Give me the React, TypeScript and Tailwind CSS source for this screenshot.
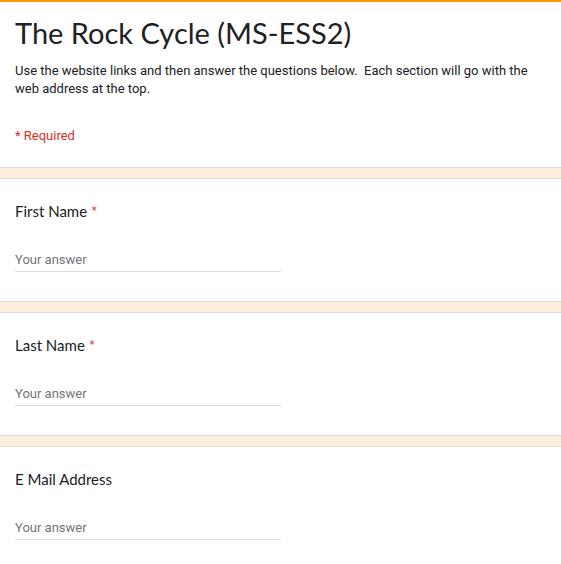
import React from 'react';

const sans = { fontFamily: 'Roboto, "Noto Sans", sans-serif' };
const display = { fontFamily: 'Lato, Roboto, sans-serif' };

interface QuestionProps {
  label: string;
  required?: boolean;
}

const Gap = () => (
  <div className="h-[12px] border-y border-[#dadce0] bg-[#fdefdc]" />
);

const Question: React.FC<QuestionProps> = ({ label, required }) => (
  <div className="bg-white px-[15px] pt-[21px] pb-[29px]">
    <div className="text-[15px] leading-[22px] text-[#202124]" style={display}>
      {label}
      {required && <span className="text-[#d93025]"> *</span>}
    </div>
    <div className="mt-[28px] w-[266px] border-b border-[#dadce0] pb-[1px] text-[13px] leading-[20px] text-[#70757a]">
      Your answer
    </div>
  </div>
);

export default function App() {
  return (
    <div className="min-h-screen w-full bg-white" style={sans}>
      {/* Header card */}
      <div className="border-t-2 border-[#ff9800] bg-white px-[15px] pt-[13px] pb-[22px]">
        <h1 className="text-[29px] leading-[36px] text-[#202124]" style={display}>
          The Rock Cycle (MS-ESS2)
        </h1>
        <p className="mt-[11px] text-[13px] leading-[18px] text-[#202124]">
          Use the website links and then answer the questions below.&nbsp; Each section will go with the
          <br />
          web address at the top.
        </p>
        <p className="mt-[29px] text-[13px] leading-[18px] text-[#d93025]">* Required</p>
      </div>

      <Gap />
      <Question label="First Name" required />
      <Gap />
      <Question label="Last Name" required />
      <Gap />
      <Question label="E Mail Address" />
    </div>
  );
}
